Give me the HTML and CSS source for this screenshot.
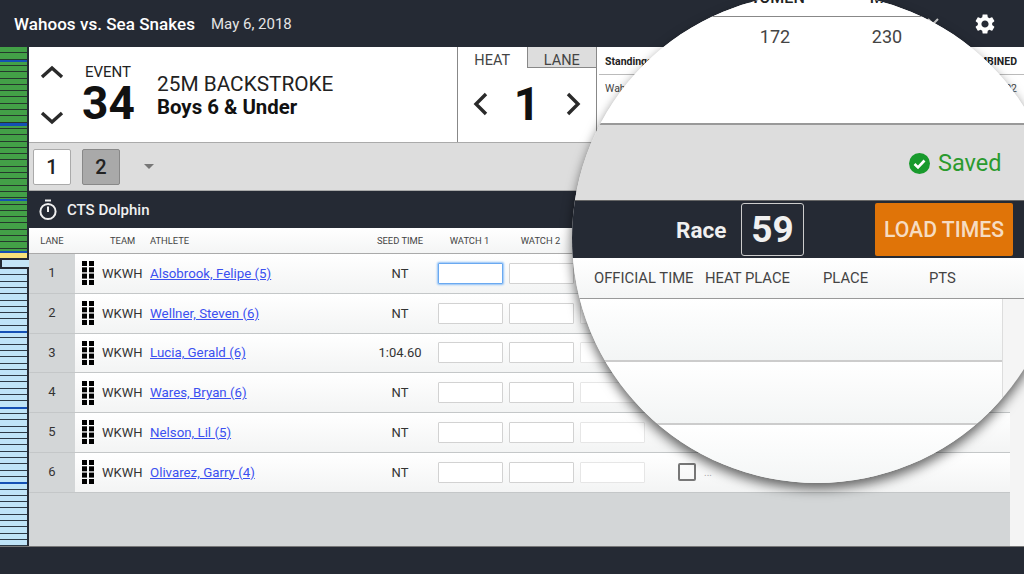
FILE: index.html
```html
<!DOCTYPE html>
<html lang="en">
<head>
  <meta charset="UTF-8">
  <title>Wahoos vs. Sea Snakes</title>
  <link rel="stylesheet" href="styles.css">
</head>
<body>
  <svg class="defs" width="0" height="0">
    <symbol id="grip" viewBox="0 0 12 24">
      <rect x="0" y="0" width="5" height="5"/><rect x="7" y="0" width="5" height="5"/>
      <rect x="0" y="6.3" width="5" height="5"/><rect x="7" y="6.3" width="5" height="5"/>
      <rect x="0" y="12.6" width="5" height="5"/><rect x="7" y="12.6" width="5" height="5"/>
      <rect x="0" y="19" width="5" height="5"/><rect x="7" y="19" width="5" height="5"/>
    </symbol>
  </svg>

  <header class="topbar">
    <h1 class="meet-title">Wahoos vs. Sea Snakes</h1>
    <span class="meet-date">May 6, 2018</span>
    <svg class="close-icon" width="14" height="14" viewBox="0 0 14 14"><path d="M2 2l10 10M12 2L2 12"/></svg>
    <svg class="gear-icon" width="24" height="24" viewBox="0 0 24 24"><path d="M19.14 12.94c.04-.3.06-.61.06-.94 0-.32-.02-.64-.07-.94l2.03-1.58c.18-.14.23-.41.12-.61l-1.92-3.32c-.12-.22-.37-.29-.59-.22l-2.39.96c-.5-.38-1.03-.7-1.62-.94l-.36-2.54c-.04-.24-.24-.41-.48-.41h-3.84c-.24 0-.43.17-.47.41l-.36 2.54c-.59.24-1.13.57-1.62.94l-2.39-.96c-.22-.08-.47 0-.59.22L2.74 8.87c-.12.21-.08.47.12.61l2.03 1.58c-.05.3-.09.63-.09.94s.02.64.07.94l-2.03 1.58c-.18.14-.23.41-.12.61l1.92 3.32c.12.22.37.29.59.22l2.39-.96c.5.38 1.03.7 1.62.94l.36 2.54c.05.24.24.41.48.41h3.84c.24 0 .44-.17.47-.41l.36-2.54c.59-.24 1.13-.56 1.62-.94l2.39.96c.22.08.47 0 .59-.22l1.92-3.32c.12-.22.07-.47-.12-.61l-2.01-1.58zM12 15.6c-1.98 0-3.6-1.62-3.6-3.6s1.62-3.6 3.6-3.6 3.6 1.62 3.6 3.6-1.62 3.6-3.6 3.6z"/></svg>
  </header>

  <div class="workspace">
    <aside class="sidebar">
      <div class="stripes-green"></div>
      <div class="stripe-yellow"></div>
      <div class="stripe-selected"></div>
      <div class="stripes-blue"></div>
    </aside>

    <main class="main">
      <section class="event-row">
        <div class="event-arrows">
          <svg width="24" height="14" viewBox="0 0 24 14"><path d="M2 12L12 3l10 9"/></svg>
          <svg width="24" height="14" viewBox="0 0 24 14"><path d="M2 2l10 9 10-9"/></svg>
        </div>
        <div class="event-number">
          <span class="event-label">EVENT</span>
          <span class="event-value">34</span>
        </div>
        <div class="event-name">
          <span class="event-stroke">25M BACKSTROKE</span>
          <span class="event-group">Boys 6 &amp; Under</span>
        </div>
        <div class="heat-panel">
          <div class="heat-tabs">
            <span class="heat-tab">HEAT</span>
            <span class="heat-tab off">LANE</span>
          </div>
          <div class="heat-nav">
            <svg width="16" height="24" viewBox="0 0 16 24"><path d="M13 2L3 12l10 10"/></svg>
            <span class="heat-value">1</span>
            <svg width="16" height="24" viewBox="0 0 16 24"><path d="M3 2l10 10L3 22"/></svg>
          </div>
        </div>
        <div class="standings">
          <div class="standings-head"><span>Standings</span><span>COMBINED</span></div>
          <div class="standings-row"><span>Wahoos</span><span>402</span></div>
        </div>
      </section>

      <section class="pool-row">
        <button class="pool-btn">1</button>
        <button class="pool-btn active">2</button>
        <span class="pool-caret"></span>
      </section>

      <section class="timer-bar">
        <svg width="20" height="22" viewBox="0 0 20 22"><circle cx="10" cy="12.5" r="7.6"/><path d="M7 1.5h6M10 7.5v5.5"/></svg>
        <span>CTS Dolphin</span>
      </section>

      <div class="table-head">
        <span class="col-lane">LANE</span>
        <span class="col-team">TEAM</span>
        <span class="col-athlete">ATHLETE</span>
        <span class="col-seed">SEED TIME</span>
        <span class="col-watch">WATCH 1</span>
        <span class="col-watch">WATCH 2</span>
      </div>

      <div class="table-row">
        <span class="col-lane">1</span>
        <svg class="grip"><use href="#grip"/></svg>
        <span class="team">WKWH</span>
        <a class="athlete" href="#">Alsobrook, Felipe (5)</a>
        <span class="col-seed">NT</span>
        <input class="watch focused"><input class="watch"><input class="watch faint">
        <span class="check"></span><span class="more">...</span>
      </div>
      <div class="table-row">
        <span class="col-lane">2</span>
        <svg class="grip"><use href="#grip"/></svg>
        <span class="team">WKWH</span>
        <a class="athlete" href="#">Wellner, Steven (6)</a>
        <span class="col-seed">NT</span>
        <input class="watch"><input class="watch"><input class="watch faint">
        <span class="check"></span><span class="more">...</span>
      </div>
      <div class="table-row">
        <span class="col-lane">3</span>
        <svg class="grip"><use href="#grip"/></svg>
        <span class="team">WKWH</span>
        <a class="athlete" href="#">Lucia, Gerald (6)</a>
        <span class="col-seed">1:04.60</span>
        <input class="watch"><input class="watch"><input class="watch faint">
        <span class="check"></span><span class="more">...</span>
      </div>
      <div class="table-row">
        <span class="col-lane">4</span>
        <svg class="grip"><use href="#grip"/></svg>
        <span class="team">WKWH</span>
        <a class="athlete" href="#">Wares, Bryan (6)</a>
        <span class="col-seed">NT</span>
        <input class="watch"><input class="watch"><input class="watch faint">
        <span class="check"></span><span class="more">...</span>
      </div>
      <div class="table-row">
        <span class="col-lane">5</span>
        <svg class="grip"><use href="#grip"/></svg>
        <span class="team">WKWH</span>
        <a class="athlete" href="#">Nelson, Lil (5)</a>
        <span class="col-seed">NT</span>
        <input class="watch"><input class="watch"><input class="watch faint">
        <span class="check"></span><span class="more">...</span>
      </div>
      <div class="table-row">
        <span class="col-lane">6</span>
        <svg class="grip"><use href="#grip"/></svg>
        <span class="team">WKWH</span>
        <a class="athlete" href="#">Olivarez, Garry (4)</a>
        <span class="col-seed">NT</span>
        <input class="watch"><input class="watch"><input class="watch faint">
        <span class="check"></span><span class="more">...</span>
      </div>
    </main>
    <div class="edge"></div>
  </div>

  <footer class="bottombar"></footer>

  <!-- magnified part of the page, sits over everything -->
  <div class="lens">
    <div class="lens-head"><span>WOMEN</span><span>MEN</span></div>
    <div class="lens-scores"><span>172</span><span>230</span></div>
    <div class="lens-status">
      <svg width="21" height="21" viewBox="0 0 21 21"><circle cx="10.5" cy="10.5" r="10.5"/><path d="M5.5 11l3.5 3.5 6.5-7"/></svg>
      <span>Saved</span>
    </div>
    <div class="lens-race">
      <span class="race-label">Race</span>
      <span class="race-box">59</span>
      <button class="load-btn">LOAD TIMES</button>
    </div>
    <div class="lens-table-head">
      <span class="lens-official">OFFICIAL TIME</span>
      <span class="lens-heat">HEAT PLACE</span>
      <span class="lens-place">PLACE</span>
      <span>PTS</span>
    </div>
    <div class="lens-rows">
      <div class="lens-row"></div>
      <div class="lens-row"></div>
      <div class="lens-row"></div>
    </div>
  </div>
</body>
</html>
```

FILE: styles.css
```css
* {
  box-sizing: border-box;
}

body {
  margin: 0;
  width: 1024px;
  height: 574px;
  overflow: hidden;
  position: relative;
  display: flex;
  flex-direction: column;
  font-family: 'Roboto', sans-serif;
  color: #222;
  background: #252a34;
}

.defs {
  position: absolute;
}

/* top bar */
.topbar {
  height: 47px;
  flex: none;
  display: flex;
  align-items: center;
  padding-left: 14px;
  color: white;
}
.meet-title {
  margin: 0;
  font-size: 17px;
  font-weight: 500;
  letter-spacing: 0.05px;
}
.meet-date {
  margin-left: 16px;
  font-size: 15px;
  color: #e4e4e4;
}
.close-icon {
  margin-left: auto;
  stroke: #ccc;
  stroke-width: 2;
  fill: none;
}
.gear-icon {
  margin-left: 33px;
  margin-right: 27px;
  fill: white;
}

.workspace {
  flex: 1;
  display: flex;
  min-height: 0;
}

/* heat sheet strip on the left */
.sidebar {
  width: 27px;
  flex: none;
  display: flex;
  flex-direction: column;
}
.stripes-green {
  height: 206px;
  background:
    linear-gradient(#1450b4, #1450b4) 0 13px / 100% 2px no-repeat,
    linear-gradient(#1450b4, #1450b4) 0 76px / 100% 3px no-repeat,
    linear-gradient(#1450b4, #1450b4) 0 152px / 100% 2px no-repeat,
    linear-gradient(#1450b4, #1450b4) 0 204px / 100% 2px no-repeat,
    repeating-linear-gradient(#43a047 0, #43a047 5.3px, #25382c 5.3px, #25382c 6.3px);
}
.stripe-yellow {
  height: 5px;
  background: #f7e27a;
}
.stripe-selected {
  height: 11px;
  margin-right: -2px;
  background: #c4e5f7;
  border: 2px solid #252a34;
  border-right: 0;
  position: relative;
}
.stripes-blue {
  flex: 1;
  background:
    linear-gradient(#1450b4, #1450b4) 0 62px / 100% 2px no-repeat,
    linear-gradient(#1450b4, #1450b4) 0 138px / 100% 2px no-repeat,
    linear-gradient(#1450b4, #1450b4) 0 213px / 100% 2px no-repeat,
    repeating-linear-gradient(#bfe4f8 0, #bfe4f8 5.3px, #2c3a46 5.3px, #2c3a46 6.3px);
}

/* main column */
.main {
  flex: 1;
  margin-left: 2px;
  background: #d3d6d7;
}
.edge {
  width: 14px;
  flex: none;
  background: #f4f4f4;
}

.event-row {
  height: 96px;
  display: flex;
  margin-right: -14px;
  position: relative;
  background: white;
  border-bottom: 1px solid #aaa;
}
.event-arrows {
  width: 46px;
  padding: 18px 0 17px 11px;
  display: flex;
  flex-direction: column;
  justify-content: space-between;
}
.event-arrows svg,
.heat-nav svg {
  fill: none;
  stroke: #2a2a2a;
  stroke-width: 3.4;
}
.event-number {
  width: 82px;
  padding-left: 7px;
  padding-top: 18px;
  display: flex;
  flex-direction: column;
}
.event-label {
  font-size: 15px;
  line-height: 15px;
  padding-left: 3px;
}
.event-value {
  font-size: 46px;
  font-weight: 700;
  line-height: 46px;
  color: #111;
}
.event-name {
  width: 300px;
  padding-top: 26px;
  display: flex;
  flex-direction: column;
}
.event-stroke {
  font-size: 20.8px;
  line-height: 22px;
}
.event-group {
  font-size: 20.4px;
  font-weight: 700;
  line-height: 24px;
  color: #111;
}
.heat-panel {
  width: 140px;
  flex: none;
  border-left: 1px solid #888;
  border-right: 1px solid #888;
}
.heat-tabs {
  display: flex;
  height: 21px;
}
.heat-tab {
  flex: 1;
  text-align: center;
  font-size: 14.5px;
  line-height: 27px;
  color: #444;
}
.heat-tab.off {
  background: #ddd;
  border-left: 1px solid #888;
  border-bottom: 1px solid #888;
  overflow: hidden;
}
.heat-nav {
  display: flex;
  align-items: center;
  justify-content: space-between;
  padding: 0 15px;
  height: 72px;
}
.heat-value {
  font-size: 46px;
  font-weight: 700;
  color: #111;
}
.standings {
  flex: 1;
  padding: 8px 0 0 2px;
  font-size: 10.5px;
}
.standings-head,
.standings-row {
  display: flex;
  justify-content: space-between;
  padding-left: 6px;
  padding-right: 7px;
}
.standings-head {
  font-weight: 700;
  color: #222;
  padding-bottom: 6px;
  border-bottom: 1px solid #bbb;
}
.standings-row {
  padding-top: 7px;
  color: #444;
}

.pool-row {
  height: 48px;
  display: flex;
  align-items: center;
  padding-left: 4px;
  background: #ddd;
  border-bottom: 1px solid #aaa;
}
.pool-btn {
  width: 38px;
  height: 36px;
  margin-right: 11px;
  font-family: inherit;
  font-size: 20px;
  font-weight: 500;
  color: #222;
  background: white;
  border: 1px solid #aaa;
  border-radius: 2px;
}
.pool-btn.active {
  background: #a9a9a9;
  border-color: #888;
}
.pool-caret {
  margin-left: 13px;
  border-left: 5px solid transparent;
  border-right: 5px solid transparent;
  border-top: 5px solid #777;
}

.timer-bar {
  height: 37px;
  display: flex;
  align-items: center;
  padding-left: 9px;
  padding-top: 1px;
  color: #f0f0f0;
  background: #252a34;
  font-size: 15px;
  font-weight: 500;
}
.timer-bar svg {
  fill: none;
  stroke: #f0f0f0;
  stroke-width: 2;
  margin-right: 9px;
}

.table-head {
  height: 26px;
  display: flex;
  align-items: center;
  background: linear-gradient(white, #f4f5f5);
  border-bottom: 1px solid #aaa;
  font-size: 9.4px;
  color: #444;
}
.col-lane {
  width: 46px;
  text-align: center;
}
.col-team {
  margin-left: 35px;
  width: 40px;
}
.col-athlete {
  width: 226px;
}
.col-seed {
  width: 48px;
  text-align: center;
  flex: none;
  white-space: nowrap;
}
.table-head .col-seed {
  margin-right: 10px;
}
.col-watch {
  width: 71px;
  text-align: center;
}

.table-row {
  height: 39.75px;
  display: flex;
  align-items: center;
  background: linear-gradient(white, #f3f4f4);
  border-bottom: 1.5px solid #c4c7c8;
  font-size: 13px;
  color: #333;
}
.table-row .col-lane {
  align-self: stretch;
  line-height: 38px;
  background: #d3d6d7;
  flex: none;
}
.grip {
  width: 12px;
  height: 24px;
  margin-left: 7px;
  flex: none;
}
.team {
  width: 48px;
  margin-left: 8px;
  flex: none;
}
.athlete {
  width: 226px;
  flex: none;
  font-size: 13.3px;
  color: #3b50f0;
}
.table-row .col-seed {
  margin-right: 14px;
  display: flex;
  justify-content: center;
}
.watch {
  width: 65px;
  height: 21px;
  margin-right: 6px;
  flex: none;
  padding: 0;
  background: white;
  border: 1px solid #d2d2d2;
  border-radius: 1px;
}
.watch.focused {
  border: 1px solid #6aa9f0;
  box-shadow: 0 0 2px 1px #8fc0f7;
}
.watch.faint {
  border-color: #e6e6e6;
}
.check {
  width: 18px;
  height: 18px;
  margin-left: 27px;
  flex: none;
  border: 2px solid #777;
  border-radius: 2px;
}
.more {
  margin-left: 8px;
  font-size: 10px;
  color: #aaa;
}

.bottombar {
  height: 28px;
  flex: none;
  background: #252a34;
  border-top: 1px solid #777;
}

/* magnifier */
.lens {
  position: absolute;
  left: 572px;
  top: -7px;
  width: 490px;
  height: 490px;
  border-radius: 50%;
  overflow: hidden;
  display: flex;
  flex-direction: column;
  background: #f5f5f5;
  box-shadow: 0 6px 12px rgba(0, 0, 0, 0.6);
}
.lens-head {
  height: 24px;
  flex: none;
  display: flex;
  padding-left: 147px;
  background: white;
  border-bottom: 1px solid #888;
  font-size: 16px;
  font-weight: 500;
  line-height: 16px;
}
.lens-head span,
.lens-scores span {
  width: 112px;
  text-align: center;
}
.lens-head span {
  margin-top: -3px;
}
.lens-scores {
  height: 108px;
  flex: none;
  display: flex;
  padding-left: 147px;
  padding-top: 9px;
  background: white;
  border-bottom: 2px solid #999;
  font-size: 18px;
  line-height: 21px;
  color: #444;
}
.lens-status {
  height: 75px;
  flex: none;
  display: flex;
  align-items: center;
  gap: 8px;
  padding-left: 337px;
  background: #ddd;
  font-size: 23.5px;
  color: #2a9a2e;
}
.lens-status svg {
  fill: #189a2c;
  margin-top: 2px;
}
.lens-status svg path {
  fill: none;
  stroke: white;
  stroke-width: 2.6;
}
.lens-race {
  height: 58px;
  flex: none;
  display: flex;
  align-items: center;
  padding-left: 104px;
  background: #252a34;
  border-top: 1px solid #666;
  color: #f0f0f0;
}
.race-label {
  width: 65px;
  font-size: 22.5px;
  font-weight: 700;
}
.race-box {
  width: 63px;
  height: 53px;
  text-align: center;
  font-size: 37px;
  font-weight: 700;
  line-height: 51px;
  border: 1px solid #ccc;
  border-radius: 3px;
}
.load-btn {
  width: 138px;
  height: 53px;
  margin-left: 71px;
  font-family: inherit;
  font-size: 21.2px;
  font-weight: 500;
  color: #f6dcc2;
  background: #e07408;
  border: 0;
  border-radius: 2px;
}
.lens-table-head {
  height: 41px;
  flex: none;
  display: flex;
  align-items: center;
  padding-left: 22px;
  background: linear-gradient(white, #f4f5f5);
  border-bottom: 1px solid #999;
  font-size: 14.8px;
  color: #444;
}
.lens-official {
  width: 111px;
}
.lens-heat {
  width: 118px;
}
.lens-place {
  width: 106px;
}
.lens-rows {
  width: 431px;
  flex: 1;
  border-right: 1px solid #ddd;
}
.lens-row {
  height: 63px;
  background: linear-gradient(white, #f3f5f5);
  border-bottom: 2px solid #ccc;
}
```
